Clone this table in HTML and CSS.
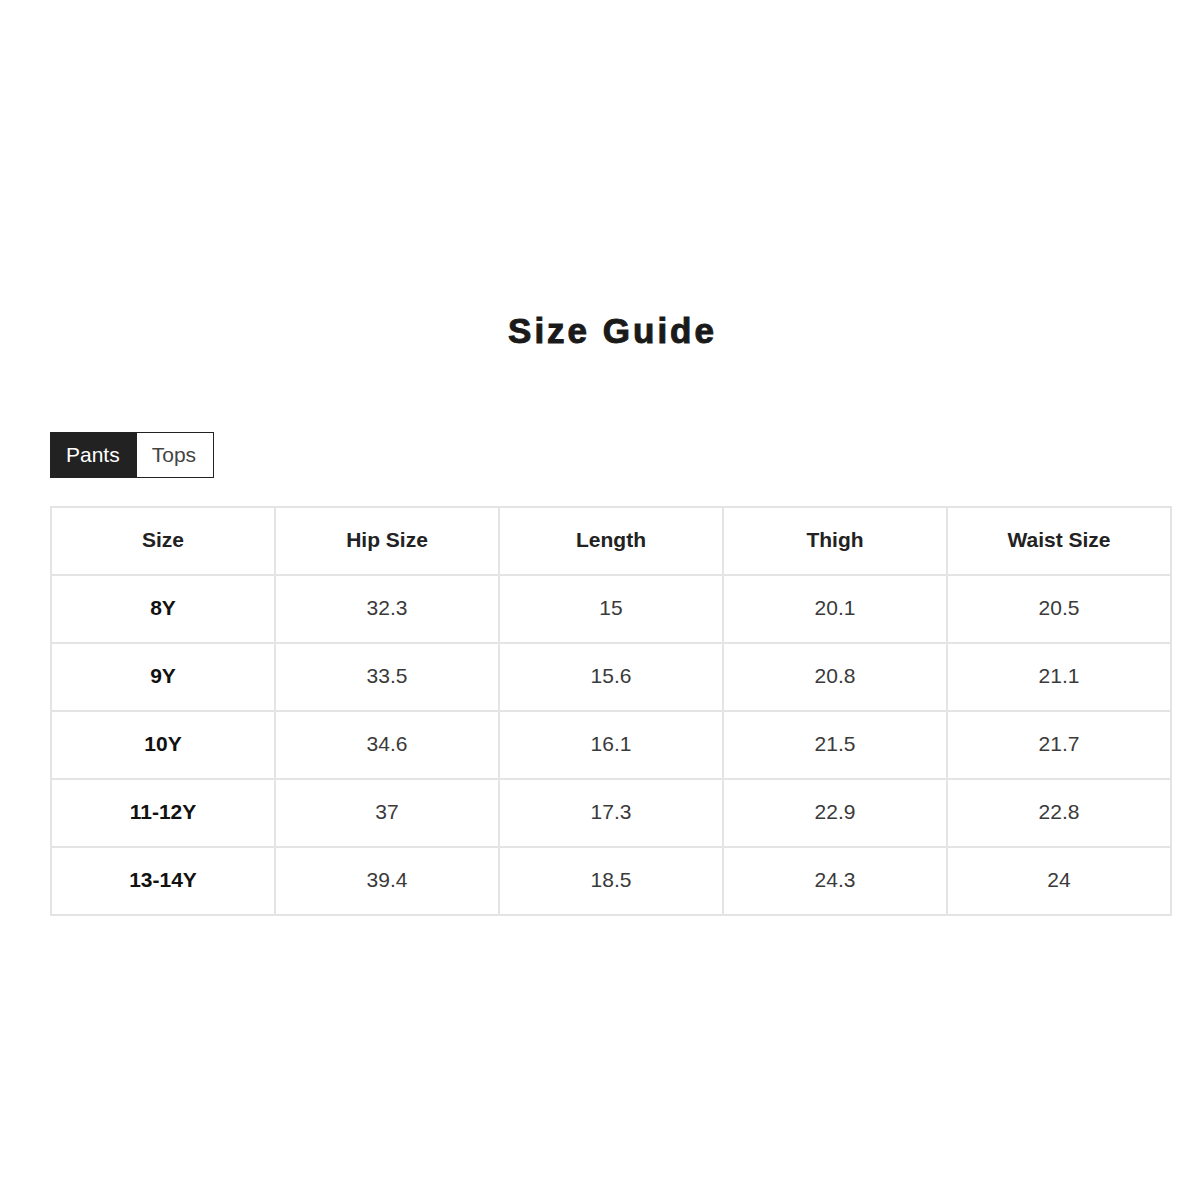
FILE: index.html
```html
<!DOCTYPE html>
<html>
<head>
<meta charset="utf-8">
<link rel="stylesheet" href="styles.css">
</head>
<body>
<div class="page">
  <h1 class="title">Size Guide</h1>
  <div class="tabs">
    <div class="tab active">Pants</div>
    <div class="tab">Tops</div>
  </div>
  <table class="grid">
    <thead>
      <tr><th>Size</th><th>Hip Size</th><th>Length</th><th>Thigh</th><th>Waist Size</th></tr>
    </thead>
    <tbody>
      <tr><td class="sz">8Y</td><td>32.3</td><td>15</td><td>20.1</td><td>20.5</td></tr>
      <tr><td class="sz">9Y</td><td>33.5</td><td>15.6</td><td>20.8</td><td>21.1</td></tr>
      <tr><td class="sz">10Y</td><td>34.6</td><td>16.1</td><td>21.5</td><td>21.7</td></tr>
      <tr><td class="sz">11-12Y</td><td>37</td><td>17.3</td><td>22.9</td><td>22.8</td></tr>
      <tr><td class="sz">13-14Y</td><td>39.4</td><td>18.5</td><td>24.3</td><td>24</td></tr>
    </tbody>
  </table>
</div>
</body>
</html>
```
FILE: styles.css
```css
html, body { margin: 0; padding: 0; background: #fff; }
body { font-family: "Liberation Sans", Arial, sans-serif; color: #222; }
.page { padding: 311px 28px 0 50px; }
.title {
  margin: 0;
  text-align: center;
  font-size: 35px;
  line-height: 40px;
  font-weight: 700;
  letter-spacing: 3px;
  color: #1a1a1a;
  -webkit-text-stroke: 1px #1a1a1a;
  padding-left: 3px;
}
.tabs {
  display: flex;
  margin-top: 81px;
  width: max-content;
  border: 1px solid #222;
}
.tab {
  height: 44px;
  line-height: 44px;
  font-size: 21px;
  padding: 0 16px 0 15px;
  color: #444;
  background: #fff;
}
.tab + .tab { padding-right: 17px; }
.tab.active { background: #222; color: #fff; }
.tab + .tab { border-left: 1px solid #222; }
.grid {
  margin-top: 28px;
  width: 1122px;
  border-collapse: collapse;
  table-layout: fixed;
}
.grid th, .grid td {
  border: 2px solid #e4e4e4;
  height: 63px;
  padding: 0 0 3px;
  text-align: center;
  font-size: 21px;
}
.grid th { font-weight: 700; color: #222; }
.grid td { color: #3a3a3a; }
.grid td.sz { font-weight: 700; color: #111; }
```
